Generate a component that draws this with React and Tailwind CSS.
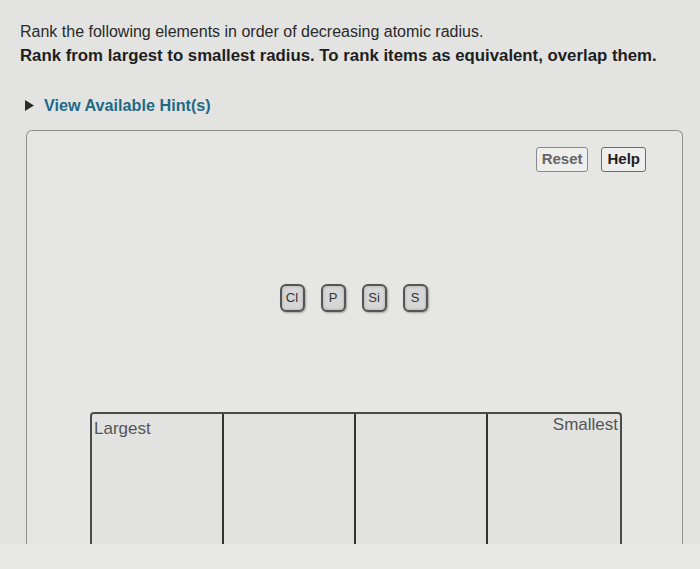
export default function App() {
  const tiles = ['Cl', 'P', 'Si', 'S'];

  return (
    <div
      className="w-[700px] h-[569px] overflow-hidden bg-[#e3e4e2] text-[#222] flex flex-col"
      style={{ fontFamily: '"Liberation Sans", Arial, sans-serif' }}
    >
      <div className="pl-[20px] pt-[22px]">
        <p className="text-[16px] leading-[20px] text-[#2a2a2a]">
          Rank the following elements in order of decreasing atomic radius.
        </p>
        <p className="mt-[4px] text-[16.8px] leading-[20px] font-bold text-[#1e1e1e]">
          Rank from largest to smallest radius. To rank items as equivalent, overlap them.
        </p>
        <div className="mt-[29px] flex items-center gap-[10px] pl-[5px]">
          <svg width="9" height="11" viewBox="0 0 9 11">
            <path d="M0 0 L9 5.5 L0 11 Z" fill="#2b2b2b" />
          </svg>
          <span className="text-[16.2px] leading-[20px] font-bold text-[#1f6a86]">
            View Available Hint(s)
          </span>
        </div>
      </div>

      <div className="ml-[26px] mr-[17px] mt-[15px] h-[414px] rounded-tl-[6px] rounded-tr-[6px] border-l border-t border-r border-[#8d8e8c] bg-[#e6e7e5] flex flex-col">
        <div className="flex justify-end gap-[13px] pr-[36px] pt-[16px]">
          <button className="h-[25px] px-[5px] rounded-[3px] border border-[#8a8a8a] bg-[#eeeeec] text-[15px] font-bold text-[#666]">
            Reset
          </button>
          <button className="h-[25px] px-[5px] rounded-[3px] border border-[#6b6b6b] bg-[#eeeeec] text-[15px] font-bold text-[#222]">
            Help
          </button>
        </div>

        <div className="mt-[112px] flex justify-center gap-[16px] pr-[2px]">
          {tiles.map((t) => (
            <div
              key={t}
              className="w-[25px] h-[28px] rounded-[6px] border-2 border-[#555] bg-[#d6d7d6] shadow-[inset_0_0_3px_rgba(0,0,0,0.25),1px_1px_2px_rgba(0,0,0,0.3)] flex items-center justify-center text-[13px] text-[#333]"
            >
              {t}
            </div>
          ))}
        </div>

        <div className="mt-[100px] ml-[63px] mr-[60px] flex-1 grid grid-cols-4 rounded-tl-[4px] rounded-tr-[4px] border-t-2 border-l-2 border-r-2 border-[#4a4a4a] bg-[#e2e3e1]">
          <div className="border-r-2 border-[#333] px-[2px] pt-[4px] text-[17px] leading-[22px] text-[#555]">
            Largest
          </div>
          <div className="border-r-2 border-[#333]"></div>
          <div className="border-r-2 border-[#333]"></div>
          <div className="px-[2px] text-right text-[17px] leading-[22px] text-[#555]">
            Smallest
          </div>
        </div>
      </div>
      <div className="flex-1 bg-[#e8e9e7]"></div>
    </div>
  );
}
